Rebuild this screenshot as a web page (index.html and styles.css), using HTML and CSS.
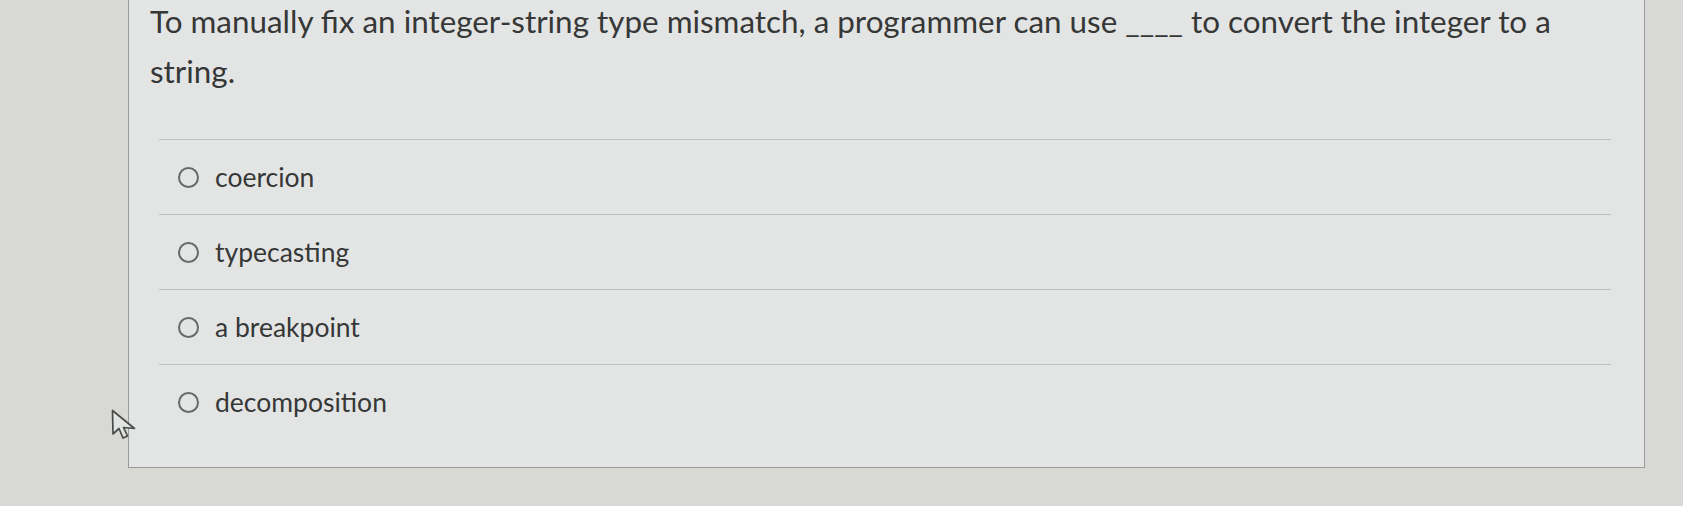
FILE: index.html
```html
<!DOCTYPE html>
<html lang="en">
<head>
<meta charset="utf-8">
<title>Question</title>
<link rel="stylesheet" href="styles.css">
</head>
<body>
<div class="page">
  <div class="card">
    <p class="question">To manually fix an integer-string type mismatch, a programmer can use ____ to convert the integer to a string.</p>
    <ul class="options">
      <li class="option"><span class="radio"></span><span class="label">coercion</span></li>
      <li class="option"><span class="radio"></span><span class="label">typecasting</span></li>
      <li class="option"><span class="radio"></span><span class="label">a breakpoint</span></li>
      <li class="option"><span class="radio"></span><span class="label">decomposition</span></li>
    </ul>
  </div>
  <svg class="cursor" width="26" height="31" viewBox="0 0 26 31" aria-hidden="true">
    <path d="M1.5 1.5 L2 25 L8 19.5 L12 29 L16.5 27 L12.5 18.5 L23.5 19.5 Z" fill="#e2e4e2" stroke="#4a4c4b" stroke-width="1.7" stroke-linejoin="round"/>
  </svg>
</div>
</body>
</html>
```

FILE: styles.css
```css
html, body {
  margin: 0;
  padding: 0;
}

body {
  background: #d8d9d4;
  font-family: Lato, "Noto Sans", "Liberation Sans", sans-serif;
  color: #363737;
  width: 1683px;
  height: 506px;
  overflow: hidden;
}

.page {
  position: relative;
  height: 506px;
  padding-left: 128px;
}

.card {
  width: 1517px;
  height: 472px;
  box-sizing: border-box;
  background: #e3e5e4;
  border: 1.5px solid #9a9c9c;
  border-top: none;
  padding: 0 0 0 21px;
}

.question {
  margin: -4px 0 0 0;
  width: 1430px;
  font-size: 31.4px;
  line-height: 50px;
}

.options {
  list-style: none;
  margin: 43px 0 0 9px;
  padding: 0;
  width: 1452px;
}

.option {
  display: flex;
  align-items: center;
  height: 74px;
  border-top: 1.5px solid #bfc1c1;
  padding-left: 19px;
  gap: 16px;
  font-size: 26.5px;
}

.radio {
  width: 21px;
  height: 21px;
  box-sizing: border-box;
  border: 2px solid #676969;
  border-radius: 50%;
  flex: none;
}

.label {
  line-height: 1;
}

.cursor {
  position: absolute;
  left: 111px;
  top: 413px;
}
```
